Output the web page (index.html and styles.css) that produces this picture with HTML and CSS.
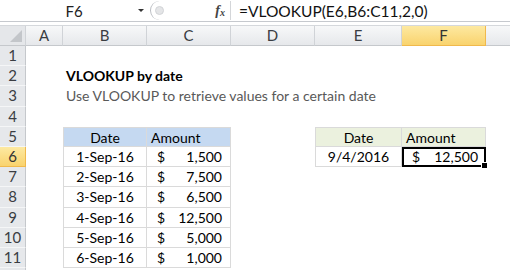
FILE: index.html
```html
<!DOCTYPE html>
<html lang="en">
  <head>
    <meta charset="UTF-8" />
    <meta name="viewport" content="width=device-width, initial-scale=1.0" />
    <title>VLOOKUP by date</title>
    <link rel="stylesheet" href="styles.css">
  </head>
  <body>
    <div class="formula-bar">
      <div class="name-box">
        <span class="name">F6</span>
        <span class="drop"></span>
      </div>
      <div class="fx-box">
        <span class="knob"></span>
        <span class="fx">f<sub>x</sub></span>
      </div>
      <div class="formula">=VLOOKUP(E6,B6:C11,2,0)</div>
    </div>
    <div class="gap"></div>

    <div class="sheet">
      <div class="row head">
        <div class="corner"></div>
        <div class="col">A</div>
        <div class="col">B</div>
        <div class="col">C</div>
        <div class="col">D</div>
        <div class="col">E</div>
        <div class="col active">F</div>
        <div class="col"></div>
      </div>

      <div class="row">
        <div class="num">1</div>
      </div>
      <div class="row">
        <div class="num">2</div>
        <div></div>
        <div class="title">VLOOKUP by date</div>
      </div>
      <div class="row">
        <div class="num">3</div>
        <div></div>
        <div class="subtitle">Use VLOOKUP to retrieve values for a certain date</div>
      </div>
      <div class="row">
        <div class="num">4</div>
      </div>
      <div class="row">
        <div class="num">5</div>
        <div></div>
        <div class="cell top left blue center">Date</div>
        <div class="cell top blue">Amount</div>
        <div></div>
        <div class="cell top left green center">Date</div>
        <div class="cell top green">Amount</div>
      </div>
      <div class="row">
        <div class="num active">6</div>
        <div></div>
        <div class="cell left center">1-Sep-16</div>
        <div class="cell money"><span>$</span><span>1,500</span></div>
        <div></div>
        <div class="cell left center">9/4/2016</div>
        <div class="cell money selected"><span>$</span><span>12,500</span><i class="handle"></i></div>
      </div>
      <div class="row">
        <div class="num">7</div>
        <div></div>
        <div class="cell left center">2-Sep-16</div>
        <div class="cell money"><span>$</span><span>7,500</span></div>
      </div>
      <div class="row">
        <div class="num">8</div>
        <div></div>
        <div class="cell left center">3-Sep-16</div>
        <div class="cell money"><span>$</span><span>6,500</span></div>
      </div>
      <div class="row">
        <div class="num">9</div>
        <div></div>
        <div class="cell left center">4-Sep-16</div>
        <div class="cell money"><span>$</span><span>12,500</span></div>
      </div>
      <div class="row">
        <div class="num">10</div>
        <div></div>
        <div class="cell left center">5-Sep-16</div>
        <div class="cell money"><span>$</span><span>5,000</span></div>
      </div>
      <div class="row">
        <div class="num">11</div>
        <div></div>
        <div class="cell left center">6-Sep-16</div>
        <div class="cell money"><span>$</span><span>1,000</span></div>
      </div>
      <div class="row">
        <div class="num"></div>
      </div>
    </div>
  </body>
</html>
```

FILE: styles.css
```css
body {
  margin: 0;
  width: 510px;
  height: 270px;
  overflow: hidden;
  background: #fff;
  font-family: Lato, "Open Sans", sans-serif;
  font-size: 14px;
  color: #000;
}

/* formula bar */
.formula-bar {
  display: flex;
  height: 21px;
  border-bottom: 1px solid #c6c9ce;
  background: #fff;
}
.name-box {
  width: 150px;
  display: flex;
  align-items: center;
}
.name {
  flex: 1;
  text-align: center;
  padding-left: 10px;
  font-size: 15px;
  color: #222;
}
.drop {
  width: 0;
  height: 0;
  margin-right: 6px;
  border-left: 3px solid transparent;
  border-right: 3px solid transparent;
  border-top: 3px solid #333;
}
.fx-box {
  width: 81px;
  display: flex;
  align-items: center;
  justify-content: space-between;
  border-left: 1px solid #b9bcc1;
  border-right: 1px solid #d4d6d9;
  border-radius: 10px 0 0 10px;
  margin: 1px 0;
  padding: 0 5px 0 4px;
  box-sizing: border-box;
}
.knob {
  width: 7px;
  height: 7px;
  border-radius: 50%;
  background: #e4e5e7;
  border: 1px solid #d2d4d7;
}
.fx {
  font-family: "Liberation Serif", serif;
  font-style: italic;
  font-weight: bold;
  font-size: 14px;
  color: #444;
}
.fx sub {
  font-size: 10px;
  vertical-align: -1px;
}
.formula {
  flex: 1;
  display: flex;
  align-items: center;
  padding-left: 8px;
  font-size: 15.5px;
  color: #111;
}
.gap {
  height: 3px;
  background: #fff;
  border-bottom: 1px solid #d5d8dc;
}

/* grid */
.row {
  display: grid;
  grid-template-columns: 26px 37px 84px 84px 84px 87px 84px 40px;
  height: 20.2px;
}
.row > div {
  box-sizing: border-box;
  height: 20.2px;
  line-height: 19px;
  white-space: nowrap;
}
.head {
  height: 20px;
}
.head > div {
  height: 20px;
  background: linear-gradient(#f7f8f9, #e6e8eb);
  border-right: 1px solid #d0d3d7;
  border-bottom: 1px solid #c5c8cc;
  text-align: center;
  color: #3a3d42;
  font-size: 15px;
}
.head .corner {
  position: relative;
  background: #e5e7ea;
}
.head .corner::after {
  content: "";
  position: absolute;
  right: 3px;
  bottom: 3px;
  border-left: 12px solid transparent;
  border-bottom: 12px solid #c3c6ca;
}
.head .active,
.num.active {
  background: linear-gradient(#fde9a1, #f9d36e);
  border-color: #f0b94c;
  color: #333;
}
.num {
  background: #e6e8eb;
  border-right: 1px solid #c5c8cc;
  border-bottom: 1px solid #f5f6f7;
  text-align: center;
  color: #3a3d42;
  font-size: 15px;
}
.num.active {
  border-bottom-color: #f0b94c;
}

.title {
  grid-column: 3 / 8;
  font-weight: bold;
  padding-left: 3px;
}
.subtitle {
  grid-column: 3 / 8;
  padding-left: 3px;
  color: #595959;
}

/* tables */
.cell {
  border-right: 1px solid #dadada;
  border-bottom: 1px solid #dadada;
  padding: 0 4px;
}
.cell.top {
  border-top: 1px solid #dadada;
}
.cell.left {
  border-left: 1px solid #dadada;
}
.center {
  text-align: center;
}
.blue {
  background: #c5d9f1;
}
.green {
  background: #ebf1de;
}
.money {
  display: flex;
  justify-content: space-between;
  padding: 0 8px 0 10px;
}
.selected {
  position: relative;
  border: 2px solid #000;
  line-height: 16px !important;
  padding: 0 6px 0 8px;
}
.handle {
  position: absolute;
  right: -4px;
  bottom: -4px;
  width: 5px;
  height: 5px;
  background: #000;
  border: 1px solid #fff;
}
```
